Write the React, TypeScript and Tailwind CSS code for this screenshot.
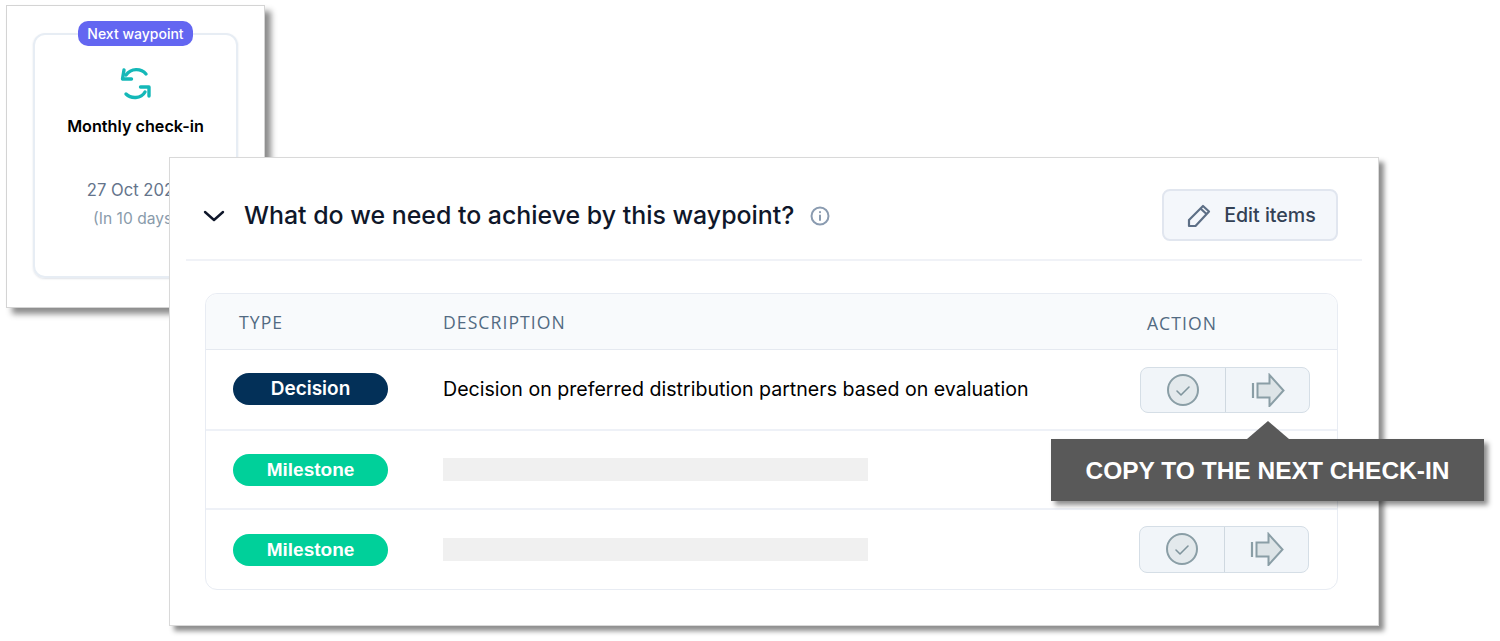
const CheckIcon = () => (
  <svg width="34" height="34" viewBox="0 0 34 34" fill="none">
    <circle cx="17" cy="17" r="15" fill="#e3e9ec" stroke="#8a9ea6" strokeWidth="2" />
    <path d="M11 18l4 4 8-8" stroke="#7f949c" strokeWidth="1.6" strokeLinecap="round" strokeLinejoin="round" />
  </svg>
);

const ArrowIcon = () => (
  <svg width="34" height="34" viewBox="0 0 34 34" fill="none">
    <path d="M2 10v15" stroke="#8a9ea6" strokeWidth="2.2" />
    <path d="M6.5 10.5h12V2l14 15.5-14 15.5v-8.5h-12z" fill="#dde4e7" stroke="#8a9ea6" strokeWidth="2" strokeLinejoin="miter" />
  </svg>
);

const RowActions = ({ className }: { className: string }) => (
  <div className={`flex w-[170px] rounded-[8px] border border-[#d5dee6] bg-[#f1f5f9] ${className}`}>
    <div className="flex w-[85px] items-center justify-center border-r border-[#cfd8e0]">
      <CheckIcon />
    </div>
    <div className="flex flex-1 items-center justify-center">
      <ArrowIcon />
    </div>
  </div>
);

const Pill = ({ label, color, font, className }: { label: string; color: string; font: string; className?: string }) => (
  <div className={`flex h-[32px] w-[155px] shrink-0 items-center justify-center rounded-full pt-[1px] text-[19px] text-white ${color} ${font} ${className ?? ""}`}>
    {label}
  </div>
);

const WaypointCard = () => (
  <div className="absolute left-[6px] top-[5px] h-[303px] w-[259px] border border-[#d4d4d4] bg-white shadow-[6px_6px_6px_rgba(0,0,0,0.45)]">
    <div className="relative ml-[26px] mt-[27px] flex h-[245px] w-[205px] flex-col items-center rounded-[12px] border-2 border-[#e7edf4] shadow-[0_1px_2px_rgba(100,116,139,0.2)]">
      <div className="absolute -top-[14px] left-[43px] flex h-[25px] w-[115px] items-center justify-center rounded-[10px] bg-[#6366f1] text-[14px] font-medium text-white">
        Next waypoint
      </div>
      <svg className="mt-[31px]" width="32" height="34" viewBox="0 0 32 34" fill="none" stroke="#14b8b8" strokeWidth="3.4" strokeLinecap="round" strokeLinejoin="round">
        <path d="M26 8C21 2 11 2 6 9" />
        <path d="M4 4L2.5 13h9" />
        <path d="M6 28c5 5 15 5 19-2" />
        <path d="M20.5 21h8.5v9" />
      </svg>
      <div className="mt-[16px] text-[16.2px] font-semibold leading-[20px] text-black">Monthly check-in</div>
      <div className="mt-[44px] text-[16.6px] leading-[20px] text-[#64748b]">27 Oct 2022</div>
      <div className="mt-[9px] text-[15.6px] leading-[20px] text-[#8a9bab]">(In 10 days)</div>
    </div>
  </div>
);

const Panel = () => (
  <div className="absolute left-[169px] top-[157px] h-[469px] w-[1210px] border border-[#d9d9d9] bg-white shadow-[5px_5px_5px_rgba(0,0,0,0.45)]">
    <div className="mx-[16px] flex h-[103px] items-center border-b-2 border-[#f0f2f7] pl-[17px] pr-[24px] pt-[15px]">
      <svg width="22" height="14" viewBox="0 0 22 14" fill="none" stroke="#0f172a" strokeWidth="2.4" strokeLinecap="round" strokeLinejoin="round">
        <path d="M2 3l9 8 9-8" />
      </svg>
      <h2 className="ml-[19px] text-[24.9px] font-medium text-[#0f172a]">What do we need to achieve by this waypoint?</h2>
      <svg className="ml-[16px]" width="20" height="20" viewBox="0 0 20 20" fill="none" stroke="#8a9bb0" strokeWidth="2" strokeLinecap="round">
        <circle cx="10" cy="10" r="8.5" />
        <path d="M10 9.5v4.5M10 6v.2" />
      </svg>
      <div className="ml-auto mb-[2px] flex h-[52px] w-[176px] items-center justify-center gap-[12px] rounded-[8px] border-2 border-[#e1e6ef] bg-[#f4f7fb] pl-[3px] text-[19.6px] font-medium text-[#334155]">
        <svg width="25" height="25" viewBox="0 0 25 25" fill="none" stroke="#5d6f86" strokeWidth="2.2" strokeLinejoin="round">
          <path d="M2 23v-6L16 3l6 5.5L8.5 23z" />
          <path d="M13.5 5.5l6 5.5" />
        </svg>
        <span className="mt-[2px]">Edit items</span>
      </div>
    </div>

    <div className="ml-[35px] mt-[32px] w-[1133px] rounded-[12px] border border-[#e8ecf3]">
      <div className="flex h-[56px] items-center rounded-t-[12px] border-b border-[#e5e9f0] bg-[#f8fafc] pt-[1px] font-['Open_Sans',sans-serif] text-[17.6px] tracking-[0.06em] text-[#526a82]">
        <span className="ml-[33px] w-[204px]">TYPE</span>
        <span>DESCRIPTION</span>
        <span className="ml-auto mr-[120px] mt-[2px]">ACTION</span>
      </div>
      <div className="flex h-[81px] items-center border-b-2 border-[#eef1f7] pl-[27px]">
        <Pill label="Decision" color="bg-[#033058]" font="font-semibold" className="mb-[2px]" />
        <span className="ml-[55px] text-[19.6px] text-black">Decision on preferred distribution partners based on evaluation</span>
        <RowActions className="ml-auto mr-[27px] h-[46px]" />
      </div>
      <div className="flex h-[79px] items-center border-b-2 border-[#eef1f7] pl-[27px]">
        <Pill label="Milestone" color="bg-[#00d09a]" font="font-['Liberation_Sans',sans-serif] font-bold" />
        <div className="ml-[55px] h-[23px] w-[425px] bg-[#f0f0f0]" />
      </div>
      <div className="flex h-[79px] items-center pl-[27px]">
        <Pill label="Milestone" color="bg-[#00d09a]" font="font-['Liberation_Sans',sans-serif] font-bold" />
        <div className="ml-[55px] h-[23px] w-[425px] bg-[#f0f0f0]" />
        <RowActions className="ml-auto mb-[1px] mr-[28px] h-[47px]" />
      </div>
    </div>
  </div>
);

const Tooltip = () => (
  <div className="absolute left-[1051px] top-[439px] flex h-[62px] w-[433px] items-center justify-center bg-[#595959] pt-[2px] font-['Liberation_Sans',sans-serif] text-[24.5px] font-bold text-white shadow-[4px_4px_5px_rgba(0,0,0,0.45)]">
    <div className="absolute -top-[18px] left-[196px] h-0 w-0 border-x-[21px] border-b-[18px] border-x-transparent border-b-[#595959]" />
    COPY TO THE NEXT CHECK-IN
  </div>
);

export default function App() {
  return (
    <div className="relative h-[641px] w-[1500px] overflow-hidden bg-white font-['Inter',sans-serif]">
      <WaypointCard />
      <Panel />
      <Tooltip />
    </div>
  );
}
